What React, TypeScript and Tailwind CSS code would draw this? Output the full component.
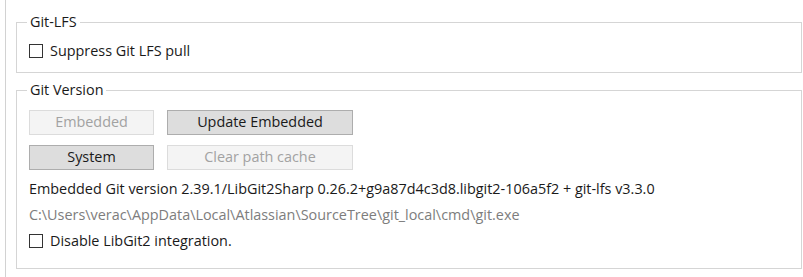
import React from 'react';

const font = { fontFamily: '"Open Sans", "Noto Sans", sans-serif' };

const Checkbox: React.FC<{ label: string }> = ({ label }) => (
  <label className="flex items-center h-[26px] text-[14.4px] text-[#1a1a1a]">
    <span className="w-[14px] h-[14px] border border-[#333333] bg-white mr-[7px] shrink-0" />
    {label}
  </label>
);

const Btn: React.FC<{ label: string; disabled?: boolean; wide?: boolean }> = ({ label, disabled, wide }) => (
  <button
    className={`h-[25px] ${wide ? 'w-[186px]' : 'w-[125px]'} border text-[14.4px] leading-none
      ${disabled ? 'bg-[#f4f4f4] border-[#dcdcdc] text-[#a2a2a2]' : 'bg-[#dddddd] border-[#adadad] text-[#1a1a1a]'}`}
  >
    {label}
  </button>
);

const Group: React.FC<{ title: string; className?: string; children: React.ReactNode }> = ({ title, className, children }) => (
  <fieldset className={`border border-[#d5d5d5] px-[12px] ${className ?? ''}`}>
    <legend className="ml-[-2px] px-[3px] text-[14.4px] leading-[20px] text-[#1a1a1a]">{title}</legend>
    {children}
  </fieldset>
);

export default function App() {
  return (
    <div className="w-[803px] h-[277px] bg-white overflow-hidden" style={font}>
      <div className="ml-[5px] h-full border-l border-[#d2d2d2] pl-[10px] pr-[1px] pt-[12px]">
        <Group title="Git-LFS" className="pb-[8px]">
          <div className="mt-[6px]">
            <Checkbox label="Suppress Git LFS pull" />
          </div>
        </Group>

        <Group title="Git Version" className="mt-[7px] pb-[14px]">
          <div className="mt-[10px] flex flex-col gap-[10px]">
            <div className="flex gap-[13px]">
              <Btn label="Embedded" disabled />
              <Btn label="Update Embedded" wide />
            </div>
            <div className="flex gap-[13px]">
              <Btn label="System" />
              <Btn label="Clear path cache" disabled wide />
            </div>
          </div>
          <div className="mt-[6px] leading-[26px] text-[14.4px] text-[#1a1a1a]">
            Embedded Git version 2.39.1/LibGit2Sharp 0.26.2+g9a87d4c3d8.libgit2-106a5f2 + git-lfs v3.3.0
          </div>
          <div className="leading-[26px] text-[14.4px] text-[#7d7d7d]">
            C:\Users\verac\AppData\Local\Atlassian\SourceTree\git_local\cmd\git.exe
          </div>
          <Checkbox label="Disable LibGit2 integration." />
        </Group>
      </div>
    </div>
  );
}
